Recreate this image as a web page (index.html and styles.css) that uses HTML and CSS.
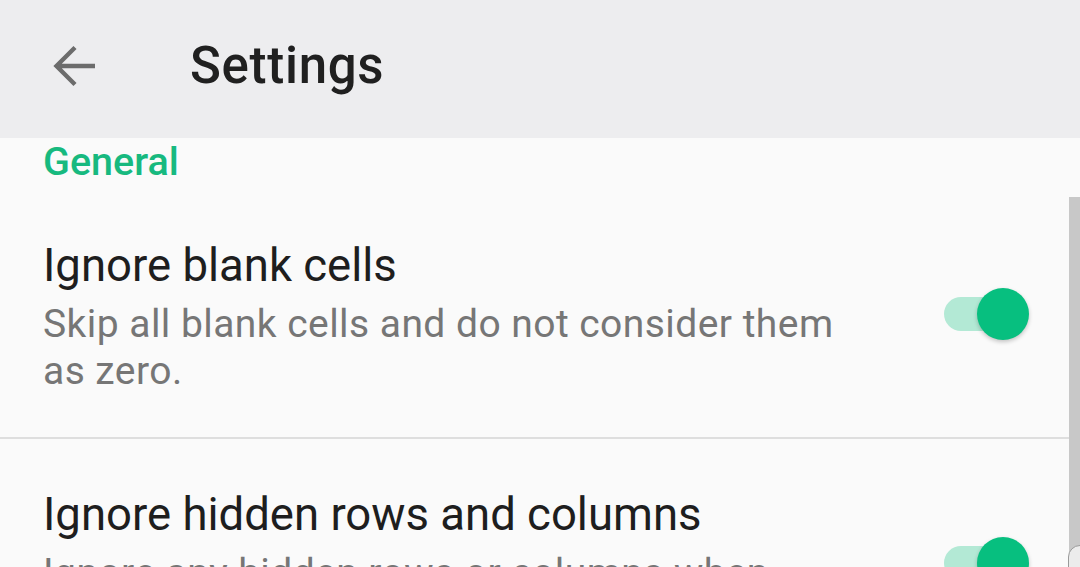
FILE: index.html
```html
<!DOCTYPE html>
<html lang="en">
<head>
<meta charset="utf-8">
<title>Settings</title>
<link rel="stylesheet" href="styles.css">
</head>
<body>
<header class="appbar">
  <button class="back" aria-label="Back">
    <svg width="46" height="44" viewBox="0 0 46 44" aria-hidden="true">
      <path d="M44 22 H6 M24 3.5 L5.5 22 L24 40.5" fill="none" stroke="#6c6c6c" stroke-width="4.4" stroke-linejoin="miter"/>
    </svg>
  </button>
  <h1 class="title">Settings</h1>
</header>
<main class="content">
  <h2 class="section">General</h2>
  <div class="item item-first">
    <div class="text">
      <div class="item-title">Ignore blank cells</div>
      <div class="item-sub">Skip all blank cells and do not consider them as zero.</div>
    </div>
    <div class="toggle on"><span class="track"></span><span class="thumb"></span></div>
  </div>
  <div class="divider"></div>
  <div class="item">
    <div class="text">
      <div class="item-title">Ignore hidden rows and columns</div>
      <div class="item-sub">Ignore any hidden rows or columns when calculating.</div>
    </div>
    <div class="toggle on"><span class="track"></span><span class="thumb"></span></div>
  </div>
</main>
<div class="scrollbar"></div>
<div class="corner"></div>
</body>
</html>
```
FILE: styles.css
```css
html, body {
  margin: 0;
  padding: 0;
  height: 567px;
  overflow: hidden;
}
body {
  background: #fafafa;
  font-family: Roboto, "Noto Sans", "Liberation Sans", sans-serif;
  position: relative;
}
.appbar {
  height: 138px;
  background: #ededef;
  display: flex;
  align-items: center;
  padding-left: 51px;
  box-sizing: border-box;
}
.back {
  border: 0;
  background: transparent;
  padding: 0;
  width: 46px;
  height: 44px;
  display: block;
  margin-bottom: 6px;
}
.back svg { display: block; }
.title {
  margin: 0 0 7px 93px;
  font-size: 51px;
  line-height: 51px;
  font-weight: 500;
  color: #202020;
  letter-spacing: 0.7px;
}
.content {
  padding-top: 4px;
}
.section {
  margin: 0 0 8px 43px;
  font-size: 39.5px;
  line-height: 40px;
  font-weight: 500;
  color: #17b97f;
}
.item {
  display: flex;
  align-items: center;
  padding: 48px 51px 42px 43px;
}
.text {
  flex: 1;
  max-width: 825px;
  margin-right: auto;
}
.item-title {
  font-size: 45.5px;
  line-height: 56px;
  color: #1e1e1e;
}
.item-sub {
  margin-top: 7px;
  font-size: 39px;
  line-height: 47px;
  letter-spacing: 0.45px;
  color: #767676;
}
.toggle {
  position: relative;
  width: 85px;
  height: 52px;
  flex: none;
  margin-top: -6px;
}
.track {
  position: absolute;
  left: 0;
  top: 9px;
  width: 66px;
  height: 34px;
  border-radius: 17px;
  background: #b3e9d5;
}
.thumb {
  position: absolute;
  right: 0;
  top: 0;
  width: 52px;
  height: 52px;
  border-radius: 50%;
  background: #07bf7f;
  box-shadow: 0 2px 4px rgba(0,0,0,0.22);
}
.divider {
  height: 2px;
  background: #dedede;
}
.scrollbar {
  position: absolute;
  right: 0;
  top: 197px;
  width: 11px;
  bottom: 0;
  background: #c8c8c8;
}
.corner {
  position: absolute;
  left: 1068px;
  top: 545px;
  width: 30px;
  height: 40px;
  box-sizing: border-box;
  border: 1px solid #9a9a9a;
  border-top-left-radius: 12px;
  background: #ececec;
}
```
